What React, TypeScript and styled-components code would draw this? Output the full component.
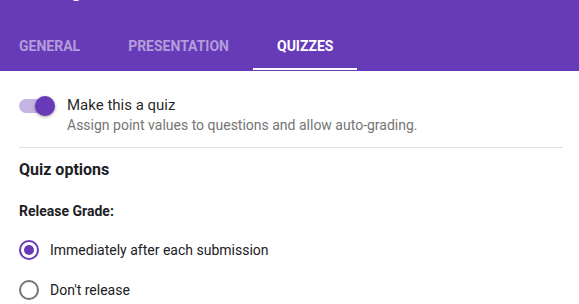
import styled, { createGlobalStyle } from 'styled-components';

const GlobalStyle = createGlobalStyle`
  html, body {
    margin: 0;
    padding: 0;
    background: #fff;
    font-family: Roboto, 'Noto Sans', Arial, sans-serif;
    overflow: hidden;
  }
`;

const tabs = ['General', 'Presentation', 'Quizzes'];

const StyledPage = styled.div`
  width: 579px;
  height: 304px;
  overflow: hidden;
`;

const StyledHeader = styled.header`
  background-color: #673ab7;
  padding: 0 0 1px;
  overflow: hidden;
`;

const StyledTitle = styled.h1`
  margin: -22px 0 20px 19px;
  font-size: 20px;
  line-height: 24px;
  font-weight: 400;
  color: #fff;
`;

const StyledTabs = styled.nav`
  display: flex;
  height: 48px;
  margin-left: -5px;
`;

const StyledTab = styled.div<{ $active?: boolean }>`
  position: relative;
  display: flex;
  align-items: center;
  padding: 0 24px;
  font-size: 14px;
  font-weight: 700;
  text-transform: uppercase;
  color: ${({ $active }) => ($active ? '#fff' : 'rgba(255, 255, 255, 0.5)')};

  &::after {
    content: '';
    position: absolute;
    left: 0;
    right: 0;
    bottom: 0;
    height: 2px;
    background: ${({ $active }) => ($active ? '#fff' : 'transparent')};
  }
`;

const StyledContent = styled.main`
  padding: 0 16px 0 19px;
`;

const StyledToggleRow = styled.div`
  display: flex;
  align-items: flex-start;
  gap: 16px;
  padding: 24px 0 12px;
  border-bottom: 1px solid #e0e0e0;
`;

const StyledSwitch = styled.div`
  position: relative;
  flex: none;
  width: 32px;
  height: 14px;
  margin-top: 4px;
  border-radius: 7px;
  background: #c5b5e3;
`;

const StyledThumb = styled.span`
  position: absolute;
  top: -3px;
  right: -4px;
  width: 20px;
  height: 20px;
  border-radius: 50%;
  background: #673ab7;
  box-shadow: 0 1px 3px rgba(0, 0, 0, 0.4);
`;

const StyledToggleTitle = styled.div`
  font-size: 15px;
  line-height: 20px;
  color: rgba(0, 0, 0, 0.87);
`;

const StyledToggleHint = styled.div`
  font-size: 14px;
  line-height: 20px;
  color: #757575;
`;

const StyledSectionTitle = styled.h2`
  margin: 0;
  padding: 11px 0 0;
  font-size: 16px;
  line-height: 22px;
  font-weight: 700;
  color: #202124;
`;

const StyledLabel = styled.div`
  padding-top: 20px;
  font-size: 14px;
  line-height: 20px;
  font-weight: 700;
  color: #202124;
`;

const StyledOptions = styled.div`
  display: flex;
  flex-direction: column;
  gap: 20px;
  padding-top: 19px;
`;

const StyledOption = styled.label`
  display: flex;
  align-items: center;
  gap: 11px;
  font-size: 14px;
  line-height: 20px;
  color: #202124;
`;

const StyledRadio = styled.span<{ $checked?: boolean }>`
  flex: none;
  display: flex;
  align-items: center;
  justify-content: center;
  width: 16px;
  height: 16px;
  border-radius: 50%;
  border: 2px solid ${({ $checked }) => ($checked ? '#673ab7' : '#757575')};

  &::after {
    content: '';
    width: 10px;
    height: 10px;
    border-radius: 50%;
    background: ${({ $checked }) => ($checked ? '#673ab7' : 'transparent')};
  }
`;

export default function App() {
  return (
    <StyledPage>
      <GlobalStyle />
      <StyledHeader>
        <StyledTitle>Settings</StyledTitle>
        <StyledTabs>
          {tabs.map((name) => (
            <StyledTab key={name} $active={name === 'Quizzes'}>
              {name}
            </StyledTab>
          ))}
        </StyledTabs>
      </StyledHeader>
      <StyledContent>
        <StyledToggleRow>
          <StyledSwitch>
            <StyledThumb />
          </StyledSwitch>
          <div>
            <StyledToggleTitle>Make this a quiz</StyledToggleTitle>
            <StyledToggleHint>
              Assign point values to questions and allow auto-grading.
            </StyledToggleHint>
          </div>
        </StyledToggleRow>
        <StyledSectionTitle>Quiz options</StyledSectionTitle>
        <StyledLabel>Release Grade:</StyledLabel>
        <StyledOptions>
          <StyledOption>
            <StyledRadio $checked />
            Immediately after each submission
          </StyledOption>
          <StyledOption>
            <StyledRadio />
            Don&apos;t release
          </StyledOption>
        </StyledOptions>
      </StyledContent>
    </StyledPage>
  );
}
